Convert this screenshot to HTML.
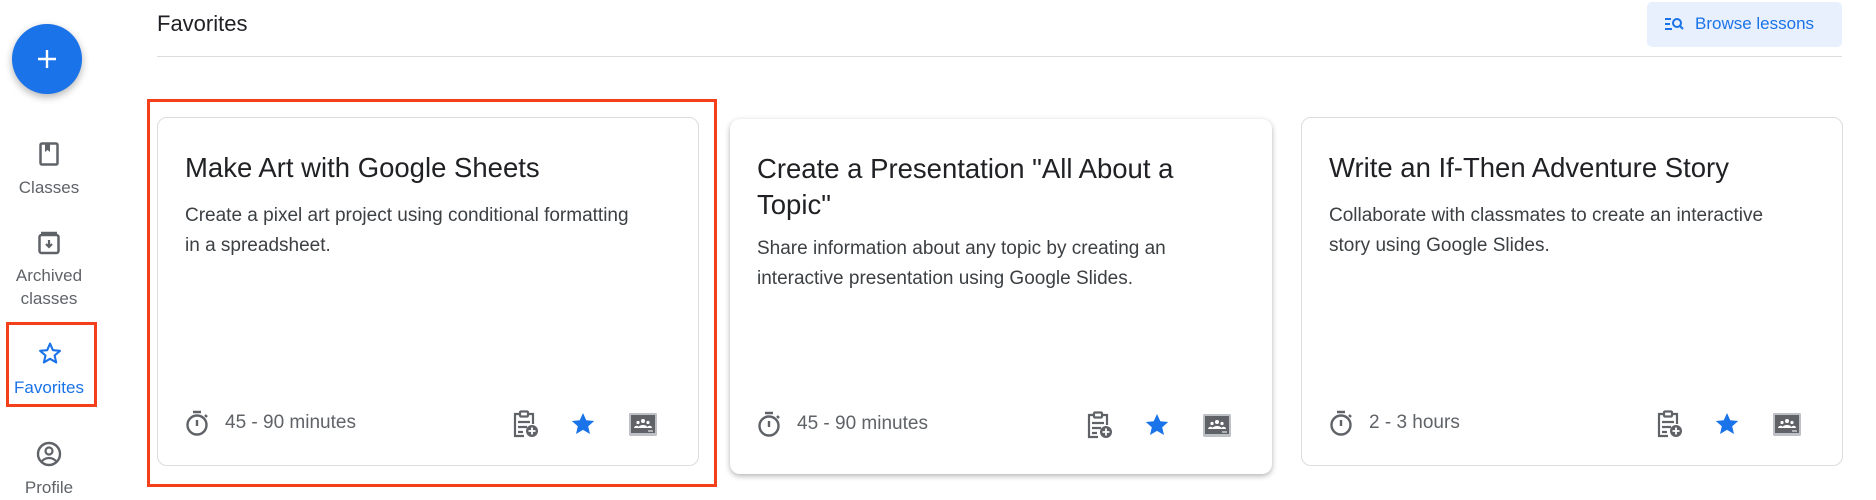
<!DOCTYPE html>
<html><head><meta charset="utf-8"><style>
*{box-sizing:border-box;margin:0;padding:0}
body{width:1876px;height:500px;background:#fff;font-family:"Liberation Sans",sans-serif;position:relative;overflow:hidden;color:#202124}
.abs{position:absolute}
.fab{left:12px;top:24px;width:70px;height:70px;border-radius:50%;background:#1a73e8;box-shadow:0 3px 8px rgba(0,0,0,.3)}
.nav{width:96px;left:1px;text-align:center;font-size:17px;color:#5f6368;line-height:23px}
.card{width:542px;height:349px;border:1px solid #dadce0;border-radius:10px;background:#fff;top:117px}
.card h2{position:absolute;left:27px;top:32px;font-size:27.5px;font-weight:normal;line-height:36px;color:#202124;width:490px}
.card p{position:absolute;left:27px;font-size:19px;line-height:30px;color:#3c4043;width:455px}
.foot{position:absolute;left:27px;top:291px;font-size:19px;color:#5f6368;display:flex;align-items:center}
.icons{position:absolute;right:40px;top:292px}
</style></head><body>
<div class="abs" style="left:157px;top:11px;font-size:22px;color:#202124">Favorites</div>
<div class="abs" style="left:157px;top:56px;width:1685px;height:1px;background:#dadce0"></div>
<div class="abs" style="left:1647px;top:2px;width:195px;height:45px;background:#e8f0fe;border-radius:5px;color:#1a73e8;font-size:17px">
<svg class="abs" style="left:17px;top:14px" width="20" height="16" viewBox="0 0 20 16"><g stroke="#1a73e8" stroke-width="2" fill="none"><path d="M1 3h6M1 8h5M1 13h7"/><circle cx="13" cy="7" r="4"/><path d="M16 10l3 3"/></g></svg>
<span class="abs" style="left:48px;top:12px">Browse lessons</span></div>

<div class="abs fab"><svg class="abs" style="left:25px;top:25px" width="20" height="20"><path d="M10 1v18M1 10h18" stroke="#fff" stroke-width="2.4"/></svg></div>

<svg class="abs" style="left:39px;top:142px" width="20" height="24"><rect x="1.5" y="1.5" width="17" height="21" rx="1.5" fill="none" stroke="#5f6368" stroke-width="2.5"/><path d="M6 2v8l2.5-2 2.5 2V2z" fill="#5f6368"/></svg>
<div class="abs nav" style="top:176px">Classes</div>
<svg class="abs" style="left:38px;top:231px" width="22" height="24"><rect x="1.5" y="4" width="19" height="18" rx="2" fill="none" stroke="#5f6368" stroke-width="2.5"/><path d="M3 2h16" stroke="#5f6368" stroke-width="2.5"/><path d="M11 9v7M8 13l3 3 3-3" stroke="#5f6368" stroke-width="2.2" fill="none"/></svg>
<div class="abs nav" style="top:264px">Archived<br>classes</div>
<div class="abs" style="left:6px;top:322px;width:91px;height:85px;border:3px solid #f43f1b"></div>
<svg class="abs" style="left:37px;top:341px" width="26" height="25" viewBox="0 0 24 24"><path d="M12 2.5l2.8 6.3 6.8.6-5.2 4.5 1.6 6.7L12 17.1l-5.9 3.5 1.6-6.7-5.2-4.5 6.8-.6z" fill="none" stroke="#1a73e8" stroke-width="2" stroke-linejoin="round"/></svg>
<div class="abs nav" style="top:376px;color:#1a73e8">Favorites</div>
<svg class="abs" style="left:36px;top:441px" width="26" height="26" viewBox="0 0 26 26"><circle cx="13" cy="13" r="11" fill="none" stroke="#5f6368" stroke-width="2.4"/><circle cx="13" cy="10" r="3.5" fill="none" stroke="#5f6368" stroke-width="2.2"/><path d="M6 20c4-4 10-4 14 0" fill="none" stroke="#5f6368" stroke-width="2.2"/></svg>
<div class="abs nav" style="top:476px">Profile</div>

<div class="abs" style="left:147px;top:99px;width:570px;height:388px;border:3px solid #f43f1b"></div>

<div class="abs card" style="left:157px">
<h2>Make Art with Google Sheets</h2>
<p style="top:83px">Create a pixel art project using conditional formatting in a spreadsheet.</p>
<div class="foot"><svg width="26" height="28" viewBox="0 0 26 28"><circle cx="12" cy="16" r="9.5" fill="none" stroke="#5f6368" stroke-width="2.4"/><path d="M8 3h8M12 11v6M20 6l2 2" stroke="#5f6368" stroke-width="2.4"/></svg><span style="margin-left:14px">45 - 90 minutes</span></div>
<div class="icons">ICONS</div>
</div>
<div class="abs card" style="left:730px;border:none;box-shadow:0 2px 6px rgba(0,0,0,.3);height:355px;top:119px">
<h2>Create a Presentation "All About a Topic"</h2>
<p style="top:115px">Share information about any topic by creating an interactive presentation using Google Slides.</p>
<div class="foot" style="top:291px"><svg width="26" height="28" viewBox="0 0 26 28"><circle cx="12" cy="16" r="9.5" fill="none" stroke="#5f6368" stroke-width="2.4"/><path d="M8 3h8M12 11v6M20 6l2 2" stroke="#5f6368" stroke-width="2.4"/></svg><span style="margin-left:14px">45 - 90 minutes</span></div>
<div class="icons" style="top:292px">ICONS</div>
</div>
<div class="abs card" style="left:1301px">
<h2>Write an If-Then Adventure Story</h2>
<p style="top:83px">Collaborate with classmates to create an interactive story using Google Slides.</p>
<div class="foot"><svg width="26" height="28" viewBox="0 0 26 28"><circle cx="12" cy="16" r="9.5" fill="none" stroke="#5f6368" stroke-width="2.4"/><path d="M8 3h8M12 11v6M20 6l2 2" stroke="#5f6368" stroke-width="2.4"/></svg><span style="margin-left:14px">2 - 3 hours</span></div>
<div class="icons">ICONS</div>
</div>
<script>
var ic='<svg width="146" height="28" viewBox="0 0 146 28"><g fill="none" stroke="#5f6368" stroke-width="2.2"><path d="M8 4H3v22h9"/><path d="M16 4h5v10"/><rect x="8" y="1.5" width="8" height="5" rx="1"/><path d="M6 12h12M6 17h9M6 22h5"/></g><circle cx="20" cy="21" r="6" fill="#5f6368"/><path d="M20 17.5v7M16.5 21h7" stroke="#fff" stroke-width="1.8"/><path d="M71 3l3.3 7.3 7.9.7-6 5.2 1.8 7.8-7-4.1-7 4.1 1.8-7.8-6-5.2 7.9-.7z" fill="#1a73e8"/><rect x="117" y="3" width="28" height="23" rx="1.5" fill="#bdc1c6"/><rect x="119" y="5" width="24" height="18" fill="#5f6368"/><circle cx="131" cy="11" r="2" fill="#fff"/><circle cx="126" cy="12.5" r="1.6" fill="#fff"/><circle cx="136" cy="12.5" r="1.6" fill="#fff"/><path d="M126 18c1-4 9-4 10 0zM122 18c.5-3 5-3 5 0zM135 18c.5-3 5-3 5 0z" fill="#fff"/><path d="M136 21h5" stroke="#fff" stroke-width="1"/></svg>';
document.querySelectorAll('.icons').forEach(function(e){e.innerHTML=ic});
</script>
</body></html>
